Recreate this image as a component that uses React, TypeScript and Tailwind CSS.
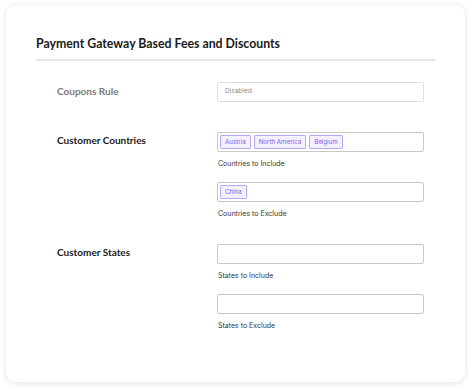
import React from 'react';

const font = { fontFamily: 'Inter, "Noto Sans", sans-serif' };
const heading = { fontFamily: 'Lato, "Noto Sans", sans-serif' };

function Tag({ label }: { label: string }) {
  return (
    <span className="inline-flex items-center h-[14px] px-[4px] border border-[#b9a6f5] bg-[#f4f1ff] text-[#7c5cf0] text-[6.2px] leading-none rounded-[1px]">
      {label}
    </span>
  );
}

function Field({ tags, placeholder, help }: { tags?: string[]; placeholder?: string; help?: string }) {
  return (
    <div className="w-[207px]">
      <div
        className={`h-[20px] border-[1.5px] rounded-[2px] flex items-center gap-[3px] px-[2px] ${
          placeholder ? 'border-[#e0e0e0]' : 'border-[#c8c8c8]'
        }`}
      >
        {tags?.map((t) => <Tag key={t} label={t} />)}
        {placeholder && <span className="pl-[5px] text-[6.5px] text-[#8a8a8a]">{placeholder}</span>}
      </div>
      {help && <p className="mt-[6px] pl-[1px] text-[7px] leading-[11px] text-[#333333]">{help}</p>}
    </div>
  );
}

export default function App() {
  return (
    <div className="w-[474px] h-[391px] bg-white pt-[5px] pl-[6px]" style={font}>
      <div className="w-[459px] h-[377px] bg-white rounded-[10px] shadow-[0_1px_6px_rgba(0,0,0,0.12)] px-[30px] pt-[30px]">
        <h1 className="text-[12.3px] leading-[18px] font-bold text-[#1a1a1a]" style={heading}>
          Payment Gateway Based Fees and Discounts
        </h1>
        <div className="mt-[6px] h-[2px] bg-[#e6e6e6]" />

        <div className="pl-[21px] mt-[21px] flex">
          <div className="w-[160px] pt-[3px] text-[10px] leading-[12px] font-bold text-[#7a7a7a]" style={heading}>Coupons Rule</div>
          <Field placeholder="Disabled" />
        </div>

        <div className="pl-[21px] mt-[30px] flex">
          <div className="w-[160px] pt-[2px] text-[10px] leading-[12px] font-bold text-[#1a1a1a]" style={heading}>Customer Countries</div>
          <div className="flex flex-col gap-[13px]">
            <Field tags={['Austria', 'North America', 'Belgium']} help="Countries to Include" />
            <Field tags={['China']} help="Countries to Exclude" />
          </div>
        </div>

        <div className="pl-[21px] mt-[25px] flex">
          <div className="w-[160px] pt-[2px] text-[10px] leading-[12px] font-bold text-[#1a1a1a]" style={heading}>Customer States</div>
          <div className="flex flex-col gap-[13px]">
            <Field help="States to Include" />
            <Field help="States to Exclude" />
          </div>
        </div>
      </div>
    </div>
  );
}
